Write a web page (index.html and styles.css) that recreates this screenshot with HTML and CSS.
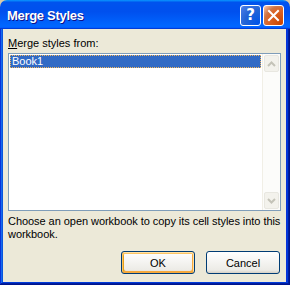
FILE: index.html
```html
<!DOCTYPE html>
<html lang="en">
<head>
    <meta charset="UTF-8">
    <title>Merge Styles</title>
    <link rel="stylesheet" href="styles.css">
</head>
<body>
    <div class="window">
        <div class="title-bar">
            <span class="title-text">Merge Styles</span>
            <div class="title-controls">
                <button class="ctrl help" aria-label="Help">?</button>
                <button class="ctrl close" aria-label="Close">
                    <svg width="13" height="13" viewBox="0 0 13 13">
                        <path d="M2 2 L11 11 M11 2 L2 11" stroke="#fff" stroke-width="2" stroke-linecap="square"/>
                    </svg>
                </button>
            </div>
        </div>
        <div class="frame">
            <div class="window-body">
                <label class="field-label" for="styleList"><u>M</u>erge styles from:</label>
                <div class="listbox" id="styleList">
                    <div class="list-items">
                        <div class="list-item selected">Book1</div>
                    </div>
                    <div class="scrollbar">
                        <div class="scroll-btn">
                            <svg width="9" height="6" viewBox="0 0 9 6"><path d="M1 5 L4.5 1.5 L8 5" fill="none" stroke="#c4c3b8" stroke-width="2"/></svg>
                        </div>
                        <div class="scroll-track"></div>
                        <div class="scroll-btn">
                            <svg width="9" height="6" viewBox="0 0 9 6"><path d="M1 1 L4.5 4.5 L8 1" fill="none" stroke="#c4c3b8" stroke-width="2"/></svg>
                        </div>
                    </div>
                </div>
                <p class="hint">Choose an open workbook to copy its cell styles into this workbook.</p>
                <div class="actions">
                    <button class="btn default">OK</button>
                    <button class="btn">Cancel</button>
                </div>
            </div>
        </div>
    </div>
</body>
</html>
```

FILE: styles.css
```css
/* General Styles */
body {
    margin: 0;
    padding: 0;
    background-color: #d9c9a8;
    font-family: "Liberation Sans", Arial, sans-serif;
    font-size: 11px;
    color: #000000;
}

.window {
    width: 290px;
    height: 285px;
    display: flex;
    flex-direction: column;
    border-radius: 7px 7px 0 0;
    overflow: hidden;
}

.title-bar {
    height: 29px;
    flex-shrink: 0;
    display: flex;
    align-items: center;
    justify-content: space-between;
    padding: 0 6px 0 7px;
    box-sizing: border-box;
    background: linear-gradient(180deg, #0997ff, #0053ee 8%, #0050ee 40%, #0066ff 88%, #0066ff 93%, #005bff 95%, #003dd7 96%, #003dd7);
}

.title-text {
    font-family: "Liberation Sans", Arial, sans-serif;
    font-weight: bold;
    font-size: 13px;
    letter-spacing: -0.3px;
    color: #ffffff;
    text-shadow: 1px 1px #0f1089;
    padding-top: 1px;
}

.title-controls {
    display: flex;
    gap: 2px;
    padding-top: 2px;
}

.ctrl {
    width: 21px;
    height: 21px;
    padding: 0;
    border: 1px solid #ffffff;
    border-radius: 3px;
    display: flex;
    align-items: center;
    justify-content: center;
    color: #ffffff;
}

.help {
    background: radial-gradient(circle at 90% 90%, #0054e9 0%, #2263d5 55%, #4479e4 90%, #a2bdf5 100%);
    font-family: "DejaVu Sans", sans-serif;
    font-weight: bold;
    font-size: 15px;
    line-height: 1;
}

.close {
    background: radial-gradient(circle at 90% 90%, #cc4600 0%, #dc6527 55%, #cd7546 70%, #ffccb2 100%);
}

.frame {
    flex: 1;
    display: flex;
    padding: 0 4px 3px 3px;
    background: #0831d9;
    box-shadow: inset -1px -1px #00138c, inset 1px 0 #0831d9, inset -2px -2px #001ea0, inset 2px 0 #166aee, inset -3px -3px #003bda, inset 3px 0 #0855dd;
}

.window-body {
    flex: 1;
    background: #ece9d8;
    padding: 7px 5px 8px 5px;
    display: flex;
    flex-direction: column;
}

.field-label {
    display: block;
    line-height: 13px;
    margin: 1px 0 3px 0;
}

.listbox {
    height: 158px;
    box-sizing: border-box;
    border: 1px solid #7f9db9;
    background: #ffffff;
    display: flex;
}

.list-items {
    flex: 1;
    padding: 1px;
}

.list-item {
    height: 13px;
    line-height: 13px;
    padding: 0 2px;
}

.list-item.selected {
    background: #316ac5;
    color: #ffffff;
    outline: 1px dotted #f3b65b;
    outline-offset: -1px;
}

.scrollbar {
    width: 17px;
    display: flex;
    flex-direction: column;
    background: #fcfcfa;
    border-left: 1px solid #f1efe6;
}

.scroll-btn {
    height: 15px;
    margin: 1px 1px 0 1px;
    border: 1px solid #e8e7e0;
    border-radius: 2px;
    background: #f3f2ec;
    display: flex;
    align-items: center;
    justify-content: center;
}

.scroll-btn:last-child {
    margin: 0 1px 1px 1px;
}

.scroll-track {
    flex: 1;
}

.hint {
    margin: 4px -3px 0 0;
    line-height: 13px;
    letter-spacing: -0.05px;
}

.actions {
    margin-top: auto;
    display: flex;
    justify-content: flex-end;
    gap: 11px;
    padding-right: 1px;
}

.btn {
    width: 74px;
    height: 23px;
    font-family: "Liberation Sans", Arial, sans-serif;
    font-size: 11px;
    color: #000000;
    border: 1px solid #003c74;
    border-radius: 3px;
    background: linear-gradient(180deg, #ffffff, #ecebe6 86%, #d6d0c5);
    padding: 0;
}

.btn.default {
    box-shadow: inset -1px 1px #fee1a8, inset 1px 2px #fcc564, inset -2px -2px #f6a93c, inset 2px -2px #e5a01a;
}
```
